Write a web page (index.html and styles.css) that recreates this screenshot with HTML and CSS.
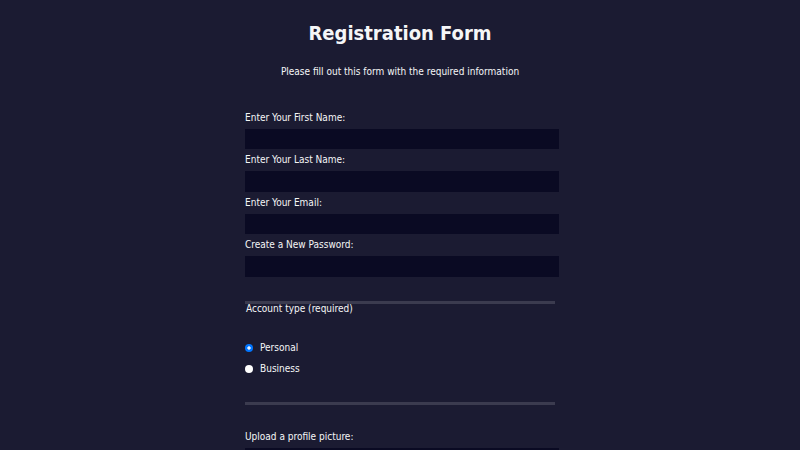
FILE: index.html
```html
<!DOCTYPE html>
<html lang="en">
<head>
<meta charset="UTF-8">
<title>Registration Form</title>
<link rel="stylesheet" href="styles.css">
</head>
<body>
<h1>Registration Form</h1>
<p class="intro">Please fill out this form with the required information</p>
<form>
  <fieldset class="group">
    <label class="field">Enter Your First Name: <input type="text" class="text-input"></label>
    <label class="field">Enter Your Last Name: <input type="text" class="text-input"></label>
    <label class="field">Enter Your Email: <input type="email" class="text-input"></label>
    <label class="field">Create a New Password: <input type="password" class="text-input"></label>
  </fieldset>
  <fieldset class="group group-radio">
    <legend class="legend">Account type (required)</legend>
    <label class="radio-label"><input type="radio" name="account" class="radio" checked> Personal</label>
    <label class="radio-label"><input type="radio" name="account" class="radio"> Business</label>
  </fieldset>
  <fieldset class="group group-last">
    <label class="field">Upload a profile picture: <input type="file" class="text-input file-input"></label>
  </fieldset>
</form>
</body>
</html>
```
FILE: styles.css
```css
html, body {
  margin: 0;
  background-color: #1b1b32;
}
body {
  color: #f5f6f7;
  font-family: "DejaVu Sans Condensed", "DejaVu Sans", sans-serif;
  font-size: 10px;
}
h1 {
  margin: 21px auto 21px;
  font-size: 20px;
  line-height: 24px;
  text-align: center;
  font-weight: bold;
}
.intro {
  margin: 0 auto 10px;
  line-height: 12px;
  text-align: center;
}
form {
  width: 310px;
  margin: 0 auto;
}
.group {
  margin: 0;
  min-width: 0;
  border: none;
  border-bottom: 3px solid #3b3b4f;
  padding: 19px 0 19px;
}
.group-radio {
  padding: 21px 0 20.5px;
}
.group-last {
  border-bottom: none;
  padding-top: 21px;
}
.legend {
  padding: 0 1px;
  line-height: 10px;
}
.field {
  display: block;
  margin: 5px 0;
  line-height: 12px;
}
.text-input {
  display: block;
  box-sizing: content-box;
  width: 100%;
  height: 16.4px;
  margin: 5px 0 0;
  padding: 1px;
  background-color: #0a0a23;
  border: 1px solid #0a0a23;
  color: #ffffff;
  font: inherit;
}
.file-input {
  height: 20px;
  padding: 2px 1px;
  color: #f5f6f7;
}
.file-input::file-selector-button {
  height: 18px;
  margin-right: 6px;
  background: #efefef;
  border: 1px solid #767676;
  border-radius: 2px;
  font: inherit;
  width: 55px;
}
.radio-label {
  display: flex;
  align-items: center;
  height: 16px;
  margin: 5px 0;
}
.radio {
  appearance: none;
  -webkit-appearance: none;
  width: 8px;
  height: 8px;
  margin: 0 7px 0 0;
  border-radius: 50%;
  background: #ffffff;
  border: none;
}
.radio:checked {
  background: radial-gradient(circle, #e8f1ff 0 1.4px, #0075ff 1.9px);
}
```
